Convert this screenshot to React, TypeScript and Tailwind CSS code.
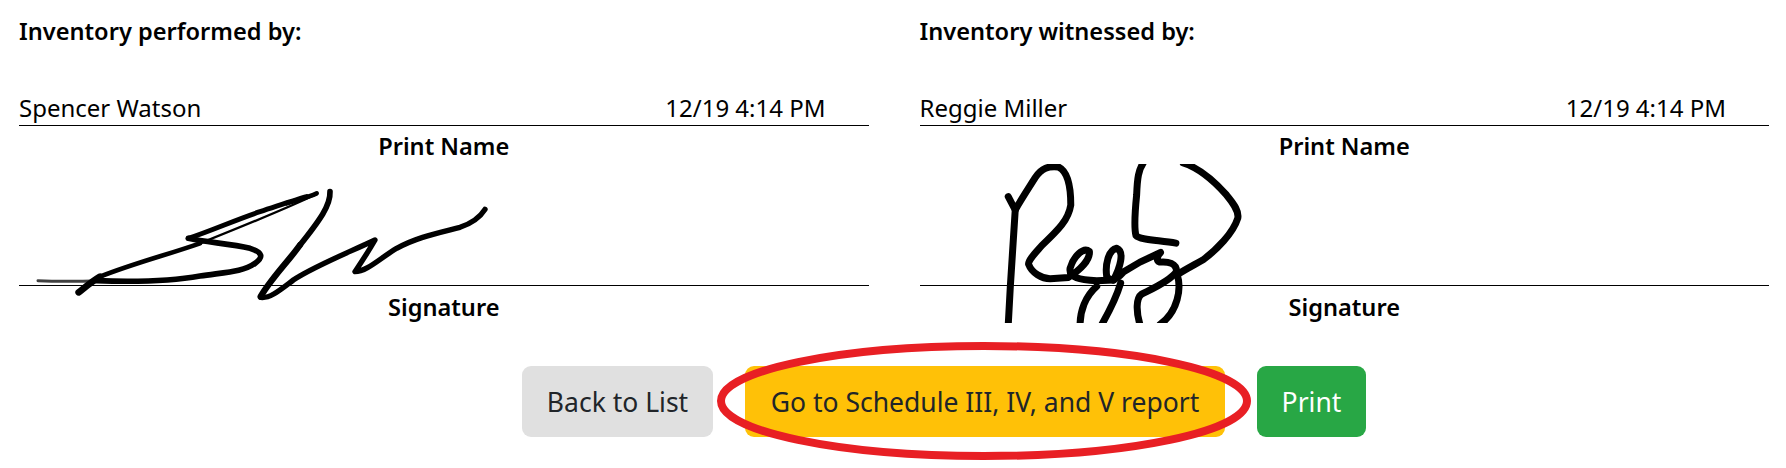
const SignatureOne = () => (
  <svg
    className="absolute left-[-19px] top-[-30px] w-[500px] h-[180px]"
    viewBox="0 0 1500 540"
    fill="none"
    stroke="#000"
    strokeLinecap="round"
    strokeLinejoin="round"
  >
    <path d="M114 452 C190 456 250 454 300 452" strokeWidth="9" opacity="0.75" />
    <path d="M290 452 C400 456 500 456 600 438 C680 426 730 425 765 400 C790 382 790 368 750 355 C690 340 620 338 565 325" strokeWidth="17" />
    <path d="M565 325 C640 300 700 272 780 245 C850 222 890 208 920 200" strokeWidth="15" />
    <path d="M860 220 C890 210 925 202 950 190" strokeWidth="14" />
    <path d="M950 192 C880 226 750 280 600 340" strokeWidth="7" />
    <path d="M600 340 C500 375 400 400 300 440" strokeWidth="14" />
    <path d="M300 440 C275 455 255 472 236 487" strokeWidth="20" />
    <path d="M990 185 C992 225 960 270 900 345" strokeWidth="17" />
    <path d="M900 345 C860 400 810 450 782 500" strokeWidth="19" />
    <path d="M782 502 C810 506 840 480 880 450 C940 410 1040 370 1125 330 C1105 365 1085 395 1065 425 C1100 425 1140 385 1190 355 C1250 322 1310 310 1380 292 C1420 278 1440 262 1455 238" strokeWidth="16" />
  </svg>
);

const SignatureTwo = () => (
  <svg
    className="absolute left-[80px] top-[4px] w-[250px] h-[159px]"
    viewBox="0 27 750 478"
    fill="none"
    stroke="#000"
    strokeWidth="21"
    strokeLinecap="round"
    strokeLinejoin="round"
  >
    <path d="M24 125 L45 165 C65 130 85 100 105 68 C125 38 145 33 175 36 C205 50 212 100 212 150 C205 195 175 225 125 272 C105 295 85 315 85 328 C95 355 125 372 150 372 L205 368 C240 345 270 315 268 290 C250 275 220 305 210 340 C205 370 240 375 290 378 L340 376" />
    <path d="M45 165 C40 250 35 330 30 400 L24 510" />
    <path d="M340 376 C360 340 375 290 350 280 C325 285 315 330 320 365 C330 380 345 380 370 352 L420 322 L482 293 C470 305 468 318 480 322 C505 320 530 325 530 350 C510 380 450 405 425 418 C408 430 408 470 420 510" />
    <path d="M290 395 C255 425 240 470 240 510" />
    <path d="M362 385 C350 425 325 475 305 510" />
    <path d="M532 360 C545 400 535 470 480 510" />
    <path d="M432 20 C415 45 412 70 410 120 C405 170 402 220 408 242 C420 256 480 256 528 265" />
    <path d="M550 24 C600 40 640 75 680 120 C705 150 718 170 714 190 C700 235 650 285 610 315 C580 332 555 345 535 358" />
  </svg>
);

const SignatureColumn = ({
  heading,
  name,
  signature,
}: {
  heading: string;
  name: string;
  signature: React.ReactNode;
}) => (
  <div>
    <h3 className="text-[23.6px] leading-[28px] font-semibold">{heading}</h3>
    <div className="h-[81px] flex items-end justify-between border-b border-black pb-[3px] pr-[43px] text-[24px] leading-[28px]">
      <span>{name}</span>
      <span>12/19 4:14 PM</span>
    </div>
    <div className="pt-[6px] text-center text-[23.6px] leading-[28px] font-semibold">
      Print Name
    </div>
    <div className="relative h-[126px] border-b border-black">{signature}</div>
    <div className="pt-[7px] text-center text-[23.6px] leading-[28px] font-semibold">
      Signature
    </div>
  </div>
);

export default function App() {
  return (
    <div className="relative w-[1786px] h-[468px] bg-white text-black overflow-hidden font-['Noto_Sans',sans-serif]">
      <div className="grid grid-cols-2 gap-[51px] pl-[19px] pr-[17px] pt-[17px]">
        <SignatureColumn
          heading="Inventory performed by:"
          name="Spencer Watson"
          signature={<SignatureOne />}
        />
        <SignatureColumn
          heading="Inventory witnessed by:"
          name="Reggie Miller"
          signature={<SignatureTwo />}
        />
      </div>

      <div className="mt-[45px] ml-[522px] flex gap-[32px] text-[26.5px] text-[#212529]">
        <button className="w-[191px] h-[71px] pt-[3px] rounded-[9px] bg-[#e0e0e0]">
          Back to List
        </button>
        <button className="w-[480px] h-[71px] pt-[3px] rounded-[9px] bg-[#ffc107]">
          Go to Schedule III, IV, and V report
        </button>
        <button className="w-[109px] h-[71px] pt-[3px] rounded-[9px] bg-[#28a745] text-white">
          Print
        </button>
      </div>

      {/* Red annotation round the report button */}
      <svg
        className="absolute left-[700px] top-[330px] w-[570px] h-[138px]"
        viewBox="0 0 570 138"
        fill="none"
      >
        <ellipse cx="284" cy="71" rx="263" ry="55" stroke="#e81f24" strokeWidth="8" />
      </svg>
    </div>
  );
}
